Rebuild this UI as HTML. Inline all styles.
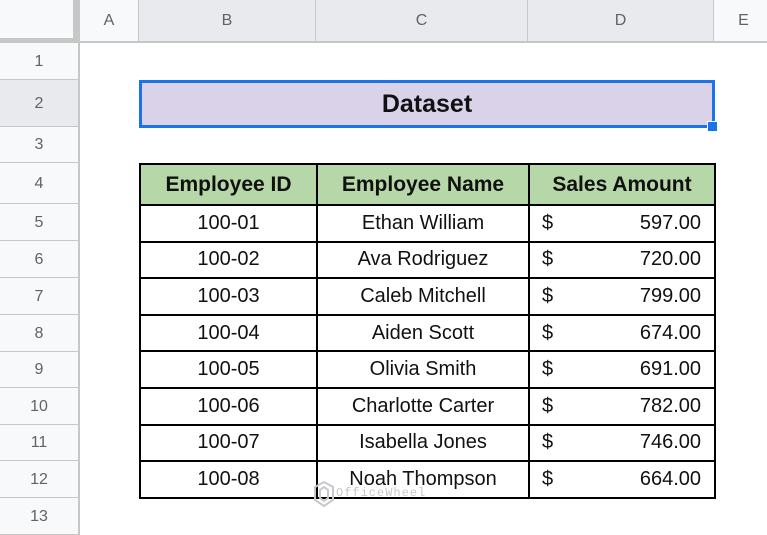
<!DOCTYPE html>
<html><head><style>
body{margin:0;width:767px;height:534px;overflow:hidden;background:#fff;font-family:"Liberation Sans",Arial,sans-serif;position:relative}
.a{position:absolute;box-sizing:border-box}
.ch{top:0;height:43px;background:#e8eaed;border-right:1px solid #c7c7c7;border-bottom:2px solid #c7c7c7;color:#5f6368;font-size:16px;text-align:center;line-height:42px}
.rh{left:0;width:80px;background:#f8f9fa;border-right:2px solid #c7c7c7;border-bottom:1px solid #c7c7c7;color:#5f6368;font-size:16px;text-align:center}
table{position:absolute;left:139px;top:163px;border-collapse:collapse;table-layout:fixed;width:575px}
td{border:2px solid #000;padding:0;font-size:20px;text-align:center;color:#111}
tr{height:36.6px}
th{border:2px solid #000;background:#b6d7a8;font-size:21px;font-weight:bold;padding:0;color:#111;white-space:nowrap}
</style></head><body>
<div class="a" style="left:0;top:0;width:80px;height:43px;background:#f8f9fa;border-right:7px solid #c7c7c7;border-bottom:2px solid #c7c7c7"></div>
<div class="a" style="left:0;top:38px;width:73px;height:5px;background:#c7c7c7"></div>
<div class="a ch" style="left:80px;width:59px;background:#f8f9fa">A</div>
<div class="a ch" style="left:139px;width:177px">B</div>
<div class="a ch" style="left:316px;width:212px">C</div>
<div class="a ch" style="left:528px;width:186px">D</div>
<div class="a ch" style="left:714px;width:60px;background:#f8f9fa">E</div>
<div class="a rh" style="top:43px;height:37px;line-height:37px">1</div>
<div class="a rh" style="top:80px;height:47px;line-height:47px;background:#e8eaed">2</div>
<div class="a rh" style="top:127px;height:36px;line-height:36px">3</div>
<div class="a rh" style="top:163px;height:41px;line-height:41px">4</div>
<div class="a rh" style="top:204px;height:37px;line-height:37px">5</div>
<div class="a rh" style="top:241px;height:37px;line-height:37px">6</div>
<div class="a rh" style="top:278px;height:37px;line-height:37px">7</div>
<div class="a rh" style="top:315px;height:37px;line-height:37px">8</div>
<div class="a rh" style="top:352px;height:36px;line-height:36px">9</div>
<div class="a rh" style="top:388px;height:37px;line-height:37px">10</div>
<div class="a rh" style="top:425px;height:36px;line-height:36px">11</div>
<div class="a rh" style="top:461px;height:37px;line-height:37px">12</div>
<div class="a rh" style="top:498px;height:37px;line-height:37px">13</div>
<div class="a" style="left:139px;top:80px;width:576px;height:48px;background:#d9d2e9;border:3px solid #1a73e8;text-align:center;line-height:42px;font-size:25px;font-weight:bold;color:#111">Dataset</div>
<div class="a" style="left:707px;top:121px;width:11px;height:11px;background:#1a73e8;border:1px solid #fff"></div>
<table>
<colgroup><col style="width:177px"><col style="width:212px"><col style="width:186px"></colgroup>
<tr style="height:41px"><th>Employee ID</th><th>Employee Name</th><th>Sales Amount</th></tr>
<tr><td>100-01</td><td>Ethan William</td><td><span style="float:left;margin-left:12px">$</span><span style="float:right;margin-right:13px">597.00</span></td></tr>
<tr><td>100-02</td><td>Ava Rodriguez</td><td><span style="float:left;margin-left:12px">$</span><span style="float:right;margin-right:13px">720.00</span></td></tr>
<tr><td>100-03</td><td>Caleb Mitchell</td><td><span style="float:left;margin-left:12px">$</span><span style="float:right;margin-right:13px">799.00</span></td></tr>
<tr><td>100-04</td><td>Aiden Scott</td><td><span style="float:left;margin-left:12px">$</span><span style="float:right;margin-right:13px">674.00</span></td></tr>
<tr><td>100-05</td><td>Olivia Smith</td><td><span style="float:left;margin-left:12px">$</span><span style="float:right;margin-right:13px">691.00</span></td></tr>
<tr><td>100-06</td><td>Charlotte Carter</td><td><span style="float:left;margin-left:12px">$</span><span style="float:right;margin-right:13px">782.00</span></td></tr>
<tr><td>100-07</td><td>Isabella Jones</td><td><span style="float:left;margin-left:12px">$</span><span style="float:right;margin-right:13px">746.00</span></td></tr>
<tr><td>100-08</td><td>Noah Thompson</td><td><span style="float:left;margin-left:12px">$</span><span style="float:right;margin-right:13px">664.00</span></td></tr>
</table>
<div class="a" style="left:336px;top:486px;font-size:12px;letter-spacing:1px;color:#c8c8cc;font-family:'Liberation Mono',monospace">OfficeWheel</div>
<svg class="a" style="left:313px;top:480px" width="22" height="28" viewBox="0 0 22 28"><path d="M11 2L20 7V20L11 26L2 20V7Z M11 7L15 10V18L11 21L7 18V10Z" fill="none" stroke="#c8c8cc" stroke-width="2"/></svg>
</body></html>
